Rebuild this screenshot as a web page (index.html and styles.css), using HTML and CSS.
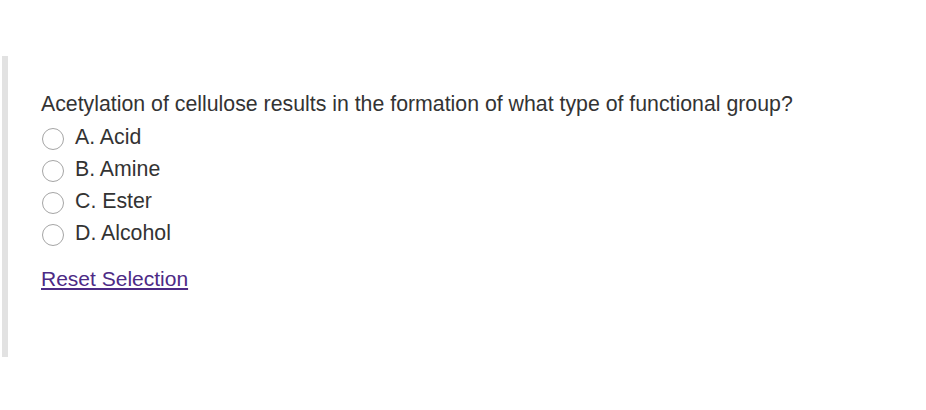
FILE: index.html
```html
<!DOCTYPE html>
<html lang="en">
<head>
    <meta charset="UTF-8">
    <title>Question</title>
    <link rel="stylesheet" href="styles.css">
</head>
<body>
    <div class="question-block">
        <div class="question-text">Acetylation of cellulose results in the formation of what type of functional group?</div>
        <ul class="answers">
            <li><span class="radio"></span><span>A. Acid</span></li>
            <li><span class="radio"></span><span>B. Amine</span></li>
            <li><span class="radio"></span><span>C. Ester</span></li>
            <li><span class="radio"></span><span>D. Alcohol</span></li>
        </ul>
        <a href="#" class="reset-link">Reset Selection</a>
    </div>
</body>
</html>
```

FILE: styles.css
```css
body {
    margin: 0;
    padding-top: 56px;
    font-family: 'Liberation Sans', Arial, sans-serif;
    background: white;
    color: #333;
}

.question-block {
    margin-left: 2px;
    border-left: 6px solid #e2e2e2;
    padding: 36px 0 0 33px;
    height: 265px;
}

.question-text {
    font-size: 21.3px;
    line-height: 24px;
}

.answers {
    list-style: none;
    margin: 7px 0 0;
    padding: 0;
}

.answers li {
    display: flex;
    align-items: center;
    gap: 11px;
    height: 32px;
    font-size: 21.3px;
}

.answers li span:last-child {
    margin-top: -3px;
}

.radio {
    flex-shrink: 0;
    box-sizing: border-box;
    width: 22px;
    height: 22px;
    border: 1.5px solid #a5a5a5;
    border-radius: 50%;
    margin-left: 1px;
}

.reset-link {
    display: inline-block;
    margin-top: 16px;
    font-size: 21px;
    line-height: 24px;
    color: #4d2a85;
}
```
